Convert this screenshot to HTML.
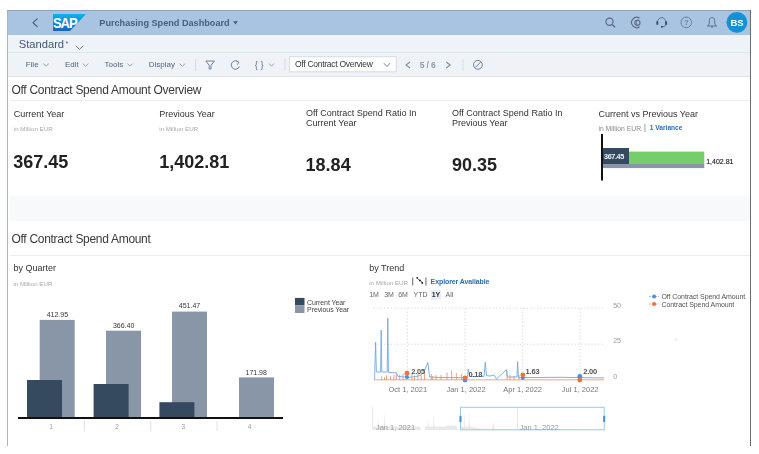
<!DOCTYPE html>
<html><head><meta charset="utf-8">
<style>
*{margin:0;padding:0}
html,body{width:759px;height:454px;overflow:hidden;background:#fff}
svg{position:absolute;left:0;top:0;display:block;filter:blur(0.35px)}
text{font-family:"Liberation Sans",sans-serif}
</style></head>
<body>
<svg width="759" height="454" viewBox="0 0 759 454">
<defs>
  <linearGradient id="sapg" x1="0" y1="0" x2="0" y2="1">
    <stop offset="0" stop-color="#0cb3ee"/>
    <stop offset="1" stop-color="#1a63bd"/>
  </linearGradient>
</defs>
<!-- ===== frame ===== -->
<rect x="7" y="10" width="1" height="436" fill="#aab4c0"/>
<rect x="7" y="10" width="744" height="1" fill="#8da2ba"/>
<rect x="750" y="10" width="1" height="436" fill="#6d6d6d"/>

<!-- ===== header ===== -->
<rect x="8" y="11" width="742" height="24" fill="#a9c4e0"/>
<path d="M37.5 18.5 L33 22.7 L37.5 27" fill="none" stroke="#4d5e7c" stroke-width="1.1"/>
<polygon points="53,14 86,14 70,31 53,31" fill="url(#sapg)"/>
<text x="53" y="28" font-size="14.2" font-weight="bold" fill="#fff" letter-spacing="-1.2" transform="translate(53 28) scale(0.92 1) translate(-53 -28)">SAP</text>
<text x="99.3" y="26.2" font-size="9.15" font-weight="bold" fill="#4a5d7e">Purchasing Spend Dashboard</text>
<polygon points="233,21.2 238,21.2 235.5,24.4" fill="#4a5d7e"/>

<!-- header icons -->
<g fill="none" stroke="#5a6b86" stroke-width="1">
  <circle cx="609.5" cy="21.8" r="3.6" stroke-width="1.2"/>
  <path d="M612.2 24.5 L615 27.2" stroke-width="1.4"/>
  <path d="M639.6 18.3 A5.1 5.1 0 1 0 639.6 26.7" stroke-width="1.1"/>
  <path d="M638.4 19.4 A3.8 3.8 0 0 0 638.4 26.2" stroke-width="0.8"/>
  <circle cx="637.4" cy="22.8" r="2.6" stroke-width="1.1"/>
  <path d="M657.4 22.6 A4.3 5 0 0 1 666 22.6" stroke-width="0.9"/>
  <path d="M665.8 24.5 Q665.8 26.8 662.4 26.8" stroke-width="0.9"/>
  <circle cx="686.3" cy="22.4" r="5.3" stroke="#6c7e9a"/>
  <path d="M712 17.5 C709.7 17.5 709.3 19.8 709.3 22 L709.1 24.5 L707.3 26 L716.7 26 L714.9 24.5 L714.7 22 C714.7 19.8 714.3 17.5 712 17.5 Z" stroke-width="0.95"/>
</g>
<rect x="656.3" y="21.3" width="2" height="3.5" rx="0.6" fill="#3c4e6c"/>
<rect x="665.1" y="21.3" width="2" height="3.5" rx="0.6" fill="#3c4e6c"/>
<rect x="661" y="26" width="1.9" height="1.6" fill="#3c4e6c"/>
<text x="686.3" y="25.4" font-size="7.8" font-weight="bold" text-anchor="middle" fill="#6c7e9a">?</text>
<rect x="711.1" y="26.4" width="1.8" height="1.3" fill="#5a6b86"/>
<circle cx="736.9" cy="22.3" r="10.4" fill="#1291d6"/>
<text x="737" y="25.8" font-size="9.5" font-weight="bold" text-anchor="middle" fill="#fff">BS</text>

<!-- ===== standard row ===== -->
<rect x="8" y="35" width="742" height="18" fill="#eef3f8"/>
<rect x="8" y="52" width="742" height="1" fill="#dde6ef"/>
<text x="18.7" y="48" font-size="11.2" fill="#43577a">Standard</text>
<text x="65.5" y="45.5" font-size="7" fill="#4b5e7e">*</text>
<path d="M75.8 45.8 L79.5 49.3 L83.2 45.8" fill="none" stroke="#6b7d98" stroke-width="1"/>

<!-- ===== toolbar row ===== -->
<rect x="8" y="53" width="742" height="23" fill="#eff3f8"/>
<rect x="8" y="76" width="742" height="1" fill="#dde4ec"/>
<g font-size="8" fill="#4f6482">
  <text x="25.7" y="67.4">File</text>
  <text x="64.9" y="67.4">Edit</text>
  <text x="104.5" y="67.4">Tools</text>
  <text x="148.8" y="67.4">Display</text>
</g>
<g fill="none" stroke="#8a9ab0" stroke-width="0.9">
  <path d="M43.3 63.6 L46.1 66.2 L48.9 63.6"/>
  <path d="M82.8 63.6 L85.6 66.2 L88.4 63.6"/>
  <path d="M127.4 63.6 L130 66.2 L132.6 63.6"/>
  <path d="M179.6 63.6 L182.4 66.2 L185.2 63.6"/>
  <path d="M269 63.6 L271.5 66.2 L274 63.6"/>
</g>
<rect x="195" y="59" width="1" height="12" fill="#d3dbe4"/>
<g fill="none" stroke="#6e819d" stroke-width="1">
  <path d="M205.8 61 L214.4 61 L211 65.3 L211 69 L209.2 69 L209.2 65.3 Z"/>
  <path d="M238.6 62.2 A4.2 4.2 0 1 0 239.4 66.5"/>
  <path d="M236.4 60.8 L238.8 62.3 L237.4 64.6"/>
</g>
<text x="254.8" y="68.4" font-size="9.3" fill="#5f7392">{ }</text>
<rect x="284.5" y="59" width="1" height="11" fill="#d3dbe4"/>
<rect x="289.5" y="56.7" width="106.7" height="15.1" fill="#fff" stroke="#d6dbe1" stroke-width="1"/>
<text x="295" y="67" font-size="8.5" fill="#32363a" letter-spacing="-0.28">Off Contract Overview</text>
<path d="M383.8 63.2 L386.9 66.5 L390 63.2" fill="none" stroke="#6e819d" stroke-width="1"/>
<path d="M410 62 L406 65 L410 68" fill="none" stroke="#7d8fa8" stroke-width="1.1"/>
<text x="419.7" y="67.8" font-size="8.5" font-weight="bold" fill="#9099a8" letter-spacing="2.1">5/6</text>
<path d="M446.2 62 L450.2 65 L446.2 68" fill="none" stroke="#7d8fa8" stroke-width="1.1"/>
<rect x="462.5" y="59.2" width="1" height="11.2" fill="#d3dbe4"/>
<g fill="none" stroke="#66799a" stroke-width="0.95">
  <circle cx="477.9" cy="64.8" r="4.4"/>
  <path d="M475.2 67.5 L480.6 62.1"/>
</g>

<!-- ===== overview title ===== -->
<text x="11.5" y="93.6" font-size="12" fill="#3a3a3a" letter-spacing="-0.3">Off Contract Spend Amount Overview</text>
<rect x="10" y="100" width="740" height="1" fill="#ededed"/>

<!-- ===== KPIs ===== -->
<g font-size="9" fill="#333">
  <text x="13.8" y="116.5">Current Year</text>
  <text x="159.3" y="116.5">Previous Year</text>
  <text x="306" y="116.2">Off Contract Spend Ratio In</text>
  <text x="306" y="126.1">Current Year</text>
  <text x="452" y="116.2">Off Contract Spend Ratio In</text>
  <text x="452" y="126.1">Previous Year</text>
  <text x="598.4" y="116.5">Current vs Previous Year</text>
</g>
<g font-size="6.2" fill="#a8a8a8">
  <text x="13.8" y="131.1">in Million EUR</text>
  <text x="159.3" y="131.1">in Million EUR</text>
</g>
<g font-size="18" font-weight="bold" fill="#222">
  <text x="13.3" y="167.8">367.45</text>
  <text x="159.3" y="167.8">1,402.81</text>
  <text x="305.6" y="170.8">18.84</text>
  <text x="452" y="170.8">90.35</text>
</g>
<text x="598.4" y="130.5" font-size="6.8" fill="#8a8a8a">in Million EUR</text>
<rect x="644.6" y="124" width="0.7" height="8" fill="#777"/>
<text x="649.8" y="130.3" font-size="6.6" font-weight="bold" fill="#2a6fb0">1 Variance</text>
<rect x="602" y="148" width="27" height="16" fill="#354a5f"/>
<rect x="629" y="151.6" width="75.3" height="12.4" fill="#74cf6a"/>
<rect x="602" y="164" width="102.3" height="4.1" fill="#8896a8"/>
<rect x="601" y="134" width="2" height="46.5" fill="#111"/>
<text x="604" y="159" font-size="7.3" font-weight="bold" fill="#eef2f6" letter-spacing="-0.4">367.45</text>
<text x="706.2" y="163.5" font-size="7" fill="#222" stroke="#222" stroke-width="0.15">1,402.81</text>

<!-- ===== gray band ===== -->
<rect x="10" y="195.5" width="740" height="25.5" fill="#f7f9fb"/>

<!-- ===== section 2 title ===== -->
<text x="11.5" y="243" font-size="12" fill="#3a3a3a" letter-spacing="-0.3">Off Contract Spend Amount</text>
<rect x="10" y="255" width="740" height="1" fill="#ededed"/>

<text x="13.5" y="270.8" font-size="9" fill="#333">by Quarter</text>
<text x="13.5" y="285.6" font-size="6.2" fill="#a8a8a8">in Million EUR</text>

<!-- ===== bar chart ===== -->
<g fill="#8896a8">
  <rect x="39.7" y="319.9" width="35" height="97.5"/>
  <rect x="106" y="330.7" width="35" height="86.7"/>
  <rect x="172" y="311.6" width="35" height="105.8"/>
  <rect x="239" y="377.4" width="35" height="40"/>
</g>
<g fill="#354a5f">
  <rect x="27" y="380" width="35" height="37.4"/>
  <rect x="93.6" y="384" width="35" height="33.4"/>
  <rect x="159.4" y="402.2" width="35" height="15.2"/>
</g>
<rect x="18" y="417" width="265" height="2" fill="#111"/>
<g font-size="7" fill="#333" text-anchor="middle">
  <text x="57.4" y="317.4">412.95</text>
  <text x="123.6" y="328.2">366.40</text>
  <text x="189.5" y="308.3">451.47</text>
  <text x="256.2" y="374.6">171.98</text>
</g>
<g font-size="6.5" fill="#9a9a9a" text-anchor="middle">
  <text x="51" y="429">1</text>
  <text x="117" y="429">2</text>
  <text x="183.3" y="429">3</text>
  <text x="249.6" y="429">4</text>
</g>
<g fill="#e2e2e2">
  <rect x="84" y="421" width="1" height="10"/>
  <rect x="150.2" y="421" width="1" height="10"/>
  <rect x="216.5" y="421" width="1" height="10"/>
</g>
<rect x="295" y="297.9" width="9.5" height="7.4" fill="#354a5f"/>
<rect x="295" y="305.3" width="9.5" height="7.7" fill="#8896a8"/>
<g font-size="7" fill="#444" letter-spacing="-0.1">
  <text x="307.1" y="304.8">Current Year</text>
  <text x="307.1" y="312.3">Previous Year</text>
</g>

<!-- ===== trend chart ===== -->
<text x="369.2" y="270.8" font-size="9" fill="#333">by Trend</text>
<text x="369.2" y="285" font-size="6.2" fill="#a8a8a8">in Million EUR</text>
<rect x="412.3" y="277.5" width="0.9" height="8" fill="#555"/>
<path d="M417.2 277.8 L419.6 280.6 L420.6 280.4 L422.4 283.2" fill="none" stroke="#333" stroke-width="0.8"/>
<circle cx="417.2" cy="277.8" r="0.9" fill="#222"/><circle cx="419.8" cy="280.5" r="0.9" fill="#222"/><circle cx="422.3" cy="283" r="0.9" fill="#222"/>
<rect x="425.5" y="277.5" width="0.9" height="8" fill="#555"/>
<text x="430.6" y="284.2" font-size="7" font-weight="bold" fill="#2a6fb0" letter-spacing="-0.1">Explorer Available</text>
<rect x="430.6" y="290" width="10.6" height="9.8" fill="#e8eef5"/>
<g font-size="7" fill="#666">
  <text x="369.2" y="297.2">1M</text>
  <text x="384.2" y="297.2">3M</text>
  <text x="398.2" y="297.2">6M</text>
  <text x="413.5" y="297.2">YTD</text>
  <text x="431.7" y="297.2" font-weight="bold" fill="#333">1Y</text>
  <text x="445.6" y="297.2">All</text>
</g>
<g stroke="#d0d0d0" stroke-width="0.9" stroke-dasharray="1.2 2.2" fill="none">
  <path d="M373.8 308.2 H604"/>
  <path d="M373.8 344.2 H604"/>
  <path d="M407.3 308.2 V380"/>
  <path d="M465 308.2 V380"/>
  <path d="M522.6 308.2 V380"/>
  <path d="M580.2 308.2 V380"/>
</g>
<g font-size="7" fill="#999">
  <text x="613.2" y="308">50</text>
  <text x="613.2" y="343">25</text>
  <text x="613.2" y="378.5">0</text>
</g>
<g font-size="7.5" fill="#777" text-anchor="middle">
  <text x="407.8" y="392">Oct 1, 2021</text>
  <text x="466" y="392">Jan 1, 2022</text>
  <text x="522.6" y="392">Apr 1, 2022</text>
  <text x="580.2" y="392">Jul 1, 2022</text>
</g>
<rect x="373.8" y="379.2" width="230.2" height="1.2" fill="#f1b596"/>
<!-- orange spikes -->
<g stroke="#ec8a5a" stroke-width="0.8" fill="none">
  <path d="M381.6 380 V376.5 M384.5 380 V377 M386.5 380 V375.5 M390.6 380 V376 M394 380 V375 M396.4 380 V373.5 M399.7 380 V374.5 M403 380 V373.5 M406.3 380 V375 M412 380 V374 M414.6 380 V375.5 M417.9 380 V373 M421.2 380 V374.5 M424.5 380 V373.5 M431.3 380 V374 M432.7 380 V376 M436 380 V375 M441 380 V375 M447 380 V372.5 M451.7 380 V370.3 M456.3 380 V373 M461.6 380 V374 M507 380 V369.8 M510 380 V375 M514 380 V376 M519 380 V375"/>
</g>
<!-- blue series -->
<path d="M374.6 379.3 L375.6 342.2 L376.4 372 L380.6 372 L381.2 330.1 L381.8 372 L387.2 372 L387.8 318.3 L388.4 372.5 L396.4 372.8 L398 376.5 L405 377 L410 377.3 L416 376.5 L420 375.5 L424 372 L427.8 362.5 L429.6 377 L440 377.5 L465 377.7 L467.5 378 L468.2 369.1 L470 376.5 L484 376.5 L485.3 362.1 L486.5 375.5 L490 376 L494 375 L496.5 379 L506.2 369.8 L507.5 377 L517 377 L517.6 361.6 L518.5 377.5 L540 377.5 L560 377.3 L580 377.6 L604 377.9" fill="none" stroke="#6fa8e4" stroke-width="0.9"/>
<circle cx="407" cy="377" r="2" fill="#4a90e0"/>
<circle cx="407" cy="373.2" r="2.4" fill="#e8743b"/>
<circle cx="465" cy="380" r="2.4" fill="#4a90e0"/>
<circle cx="465" cy="377.9" r="2.4" fill="#e8743b"/>
<circle cx="522.8" cy="378" r="2" fill="#4a90e0"/>
<circle cx="522.8" cy="375" r="2.4" fill="#e8743b"/>
<circle cx="579.8" cy="376.5" r="2.4" fill="#4a90e0"/>
<circle cx="579.8" cy="380" r="2.4" fill="#e8743b"/>
<g font-size="7.5" font-weight="bold" fill="#555" letter-spacing="-0.2">
  <text x="411.2" y="373.6">2.05</text>
  <text x="468.5" y="377">0.18</text>
  <text x="525.6" y="374">1.63</text>
  <text x="583.2" y="374">2.00</text>
</g>
<rect x="675.3" y="339.2" width="1" height="1" fill="#aaa"/>
<!-- legend -->
<path d="M649 296.6 H659" stroke-width="0.8" fill="none" stroke="#7fb2e6" stroke-dasharray="2 1"/>
<path d="M649 304 H659" stroke-width="0.8" fill="none" stroke="#f0a07a" stroke-dasharray="2 1"/>
<circle cx="654.1" cy="296.6" r="2" fill="#4a90e0"/>
<circle cx="654.1" cy="304" r="2" fill="#e8743b"/>
<g font-size="7" fill="#555" letter-spacing="-0.07">
  <text x="661.4" y="299.1">Off Contract Spend Amount</text>
  <text x="661.4" y="306.5">Contract Spend Amount</text>
</g>

<!-- navigator -->
<rect x="372" y="407" width="0.8" height="23" fill="#e6e6e6"/>
<path d="M373 430 L373 426.5 L377.5 426.5 L378.3 419 L379 426.5 L384 426.5 L384.6 411.9 L385.3 426.5 L420 426.5 L421 430 L425 430 L425 426.5 L427.5 426.5 L428 418 L428.6 426.5 L433 426.5 L433.6 411 L434.3 426.5 L446 426.5 L447 425.5 L456 425.5 L458 430 L460 430 L461 426.5 L464 426.5 L464.4 411 L465 426.5 L468.6 426.5 L469.2 411 L469.8 426.5 L476 427.5 L480 428.5 L492 429 L493.5 422 L494.5 429 L604 429.5 L604 430 Z" fill="#e9e9e9"/>
<rect x="460.5" y="407.3" width="143.7" height="22.5" fill="none" stroke="#9ccaf2" stroke-width="1"/>
<rect x="517" y="407.5" width="0.8" height="22.5" fill="#e0e0e0"/>
<rect x="459.5" y="415.8" width="2" height="6.3" fill="#3d8fe0"/>
<rect x="603.2" y="415.8" width="2" height="6.3" fill="#3d8fe0"/>
<g font-size="7.5" fill="#9a9a9a">
  <text x="375.9" y="430">Jan 1, 2021</text>
  <text x="519.6" y="430">Jan 1, 2022</text>
</g>

</svg>
</body></html>
